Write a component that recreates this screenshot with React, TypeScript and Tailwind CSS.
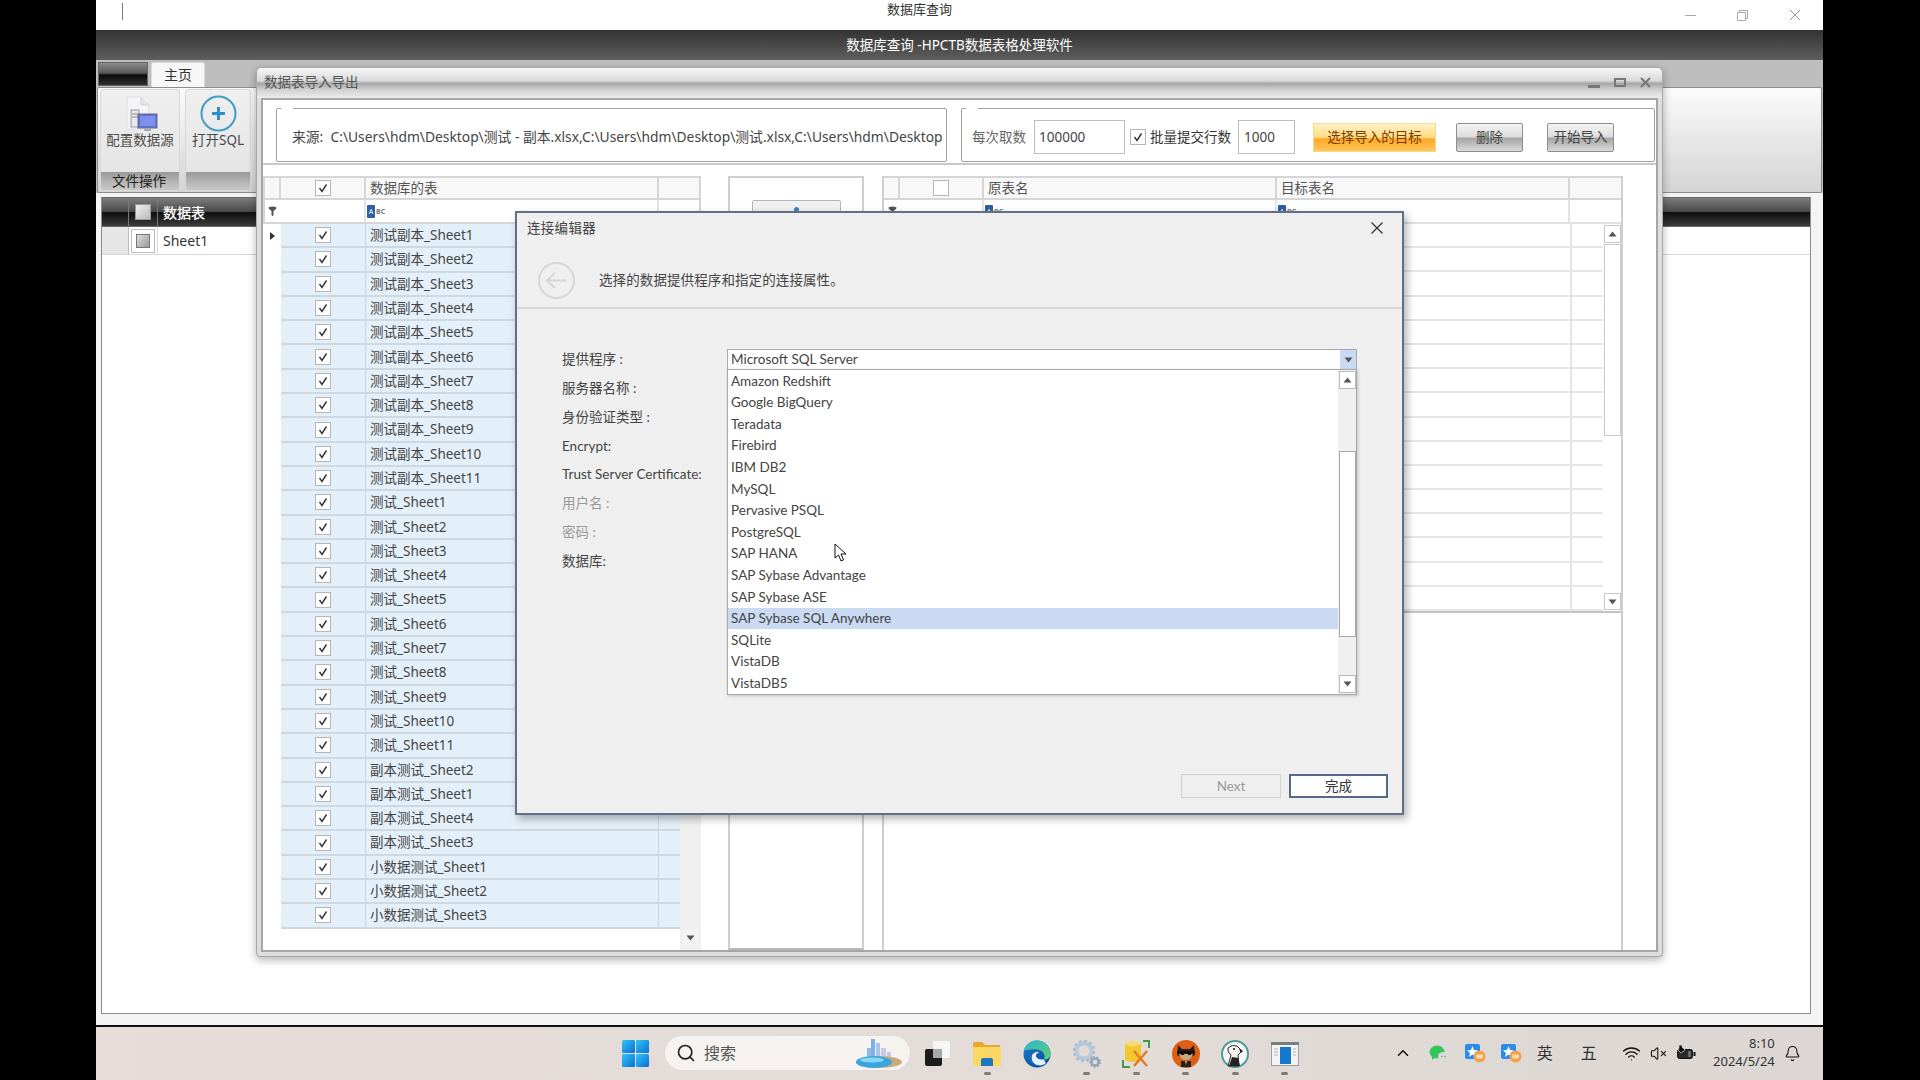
import { Bell, ChevronUp, Search, VolumeX, Wifi } from "lucide-react";

const TABLES = [
  ...Array.from({ length: 11 }, (_, i) => `测试副本_Sheet${i + 1}`),
  ...Array.from({ length: 11 }, (_, i) => `测试_Sheet${i + 1}`),
  "副本测试_Sheet2",
  "副本测试_Sheet1",
  "副本测试_Sheet4",
  "副本测试_Sheet3",
  "小数据测试_Sheet1",
  "小数据测试_Sheet2",
  "小数据测试_Sheet3",
];

const PROVIDERS = [
  "Amazon Redshift",
  "Google BigQuery",
  "Teradata",
  "Firebird",
  "IBM DB2",
  "MySQL",
  "Pervasive PSQL",
  "PostgreSQL",
  "SAP HANA",
  "SAP Sybase Advantage",
  "SAP Sybase ASE",
  "SAP Sybase SQL Anywhere",
  "SQLite",
  "VistaDB",
  "VistaDB5",
];

const FIELDS = [
  { label: "提供程序 :" },
  { label: "服务器名称 :" },
  { label: "身份验证类型 :" },
  { label: "Encrypt:" },
  { label: "Trust Server Certificate:" },
  { label: "用户名 :", muted: true },
  { label: "密码 :", muted: true },
  { label: "数据库:" },
];

function Check({ checked = true }: { checked?: boolean }) {
  return (
    <span className="flex h-[16px] w-[16px] items-center justify-center border border-[#b5b5b5] bg-white">
      {checked && (
        <svg width="12" height="12" viewBox="0 0 12 12" fill="none" stroke="#333" strokeWidth="1.4">
          <path d="M2.5 6 L5 9.5 L9.5 2.5" />
        </svg>
      )}
    </span>
  );
}

function Triangle({ up = false }: { up?: boolean }) {
  return (
    <svg width="9" height="6" viewBox="0 0 9 6" fill="#555">
      <path d={up ? "M4.5 0.5 L8.5 5.5 L0.5 5.5 Z" : "M0.5 0.5 L8.5 0.5 L4.5 5.5 Z"} />
    </svg>
  );
}

function AbcMark() {
  return (
    <span className="flex h-[13px] items-center">
      <span className="flex h-[13px] w-[8px] items-center justify-center rounded-[1px] bg-[#2f5f9e] text-[7px] leading-none text-white">
        A
      </span>
      <span className="ml-[1px] text-[7px] font-bold leading-none text-[#777]">BC</span>
    </span>
  );
}

function FilterMark() {
  return (
    <svg width="9" height="11" viewBox="0 0 9 11" fill="#555">
      <path d="M0.5 2 Q0.5 0.5 4.5 0.5 Q8.5 0.5 8.5 2 Q8.5 3 5.5 5 V9 L4.5 10.5 L3.5 9 V5 Q0.5 3 0.5 2 Z" />
    </svg>
  );
}

function DataSourceIcon() {
  return (
    <svg width="36" height="36" viewBox="0 0 36 36">
      <path d="M5 1 H19 L27 9 V33 H5 Z" fill="#f4f4f6" stroke="#dcdce0" />
      <path d="M19 1 V9 H27" fill="#e4e4e8" stroke="#d2d2d6" />
      <rect x="9" y="14" width="8" height="17" fill="#e9e9ec" stroke="#9a9ca6" />
      <path d="M10 18 H16 M10 21 H16" stroke="#8a8d96" />
      <rect x="16" y="18" width="19" height="14" fill="#5d72d8" stroke="#666b80" />
      <rect x="18" y="20" width="15" height="10" fill="#7f90ec" />
      <rect x="22" y="32" width="7" height="3" fill="#a7a9b2" />
    </svg>
  );
}

function WindowsLogo() {
  return (
    <svg width="27" height="27" viewBox="0 0 27 27">
      <defs>
        <linearGradient id="winBlue" x1="0" y1="0" x2="1" y2="1">
          <stop offset="0" stopColor="#35c3f5" />
          <stop offset="1" stopColor="#0670d6" />
        </linearGradient>
      </defs>
      <rect x="0" y="0" width="13" height="13" rx="1.5" fill="url(#winBlue)" />
      <rect x="14" y="0" width="13" height="13" rx="1" fill="url(#winBlue)" />
      <rect x="0" y="14" width="13" height="13" rx="1" fill="url(#winBlue)" />
      <rect x="14" y="14" width="13" height="13" rx="1.5" fill="url(#winBlue)" />
    </svg>
  );
}

function CityArt() {
  return (
    <svg width="47" height="32" viewBox="0 0 47 32">
      <rect x="16" y="2" width="4" height="20" fill="#7fb1e6" />
      <rect x="21" y="6" width="4" height="16" fill="#a6c6ee" />
      <rect x="12" y="11" width="4" height="11" fill="#93bbea" />
      <rect x="26" y="11" width="5" height="11" fill="#c7c9e8" />
      <rect x="32" y="15" width="4" height="7" fill="#c4c8dc" />
      <ellipse cx="24" cy="25" rx="23" ry="6" fill="#c9aa7a" />
      <ellipse cx="19" cy="25" rx="18" ry="6" fill="#39a7dd" />
      <ellipse cx="17" cy="23" rx="12" ry="2.5" fill="#8bd7f5" />
    </svg>
  );
}

function TaskViewIcon() {
  return (
    <svg width="27" height="27" viewBox="0 0 27 27">
      <rect x="9" y="1" width="17" height="17" rx="2" fill="#f6f6f6" />
      <rect x="1" y="9" width="17" height="17" rx="2" fill="#1c1c1c" />
      <rect x="9" y="9" width="9" height="9" fill="#a9a9a9" />
    </svg>
  );
}

function FolderIcon() {
  return (
    <svg width="28" height="26" viewBox="0 0 28 26">
      <path d="M0 3 Q0 1 2 1 H9 L12 4 H27 V24 H0 Z" fill="#e9a92c" />
      <rect x="0" y="6" width="28" height="19" rx="1" fill="#fbd864" />
      <path d="M8 25 V19 Q8 17 10 17 H18 Q20 17 20 19 V25 Z" fill="#1f77c4" />
    </svg>
  );
}

function EdgeIcon() {
  return (
    <svg width="28" height="28" viewBox="0 0 28 28">
      <defs>
        <linearGradient id="edgeBlue" x1="0" y1="0" x2="0.6" y2="1">
          <stop offset="0" stopColor="#1b7fd2" />
          <stop offset="1" stopColor="#0c4f9d" />
        </linearGradient>
        <linearGradient id="edgeGreen" x1="0" y1="0" x2="1" y2="1">
          <stop offset="0" stopColor="#2fb6c9" />
          <stop offset="1" stopColor="#5ed07a" />
        </linearGradient>
      </defs>
      <circle cx="14" cy="14" r="13.5" fill="url(#edgeBlue)" />
      <path d="M1 11 C3 4 8 0.5 14 0.5 C22 0.5 27.5 6 27.5 13.5 C27.5 18 24 20 21 19.5 C23 15 20 10 14 9.5 C8 9 3 10 1 11 Z" fill="url(#edgeGreen)" />
      <path d="M21 19.5 C17 20 13 18.5 13 15.5 C13 13.5 15 12.5 16.5 12.5 C13 10.5 8.5 13 8.5 17.5 C8.5 22 12 25.5 17 25.5 C19 25.5 21 24.5 23 23 C22 22 21.5 21 21 19.5 Z" fill="#e4f2fb" />
      <path d="M14 12 C10 12.5 8.5 15 8.5 17.5 C8.5 22 12 25.5 17 25.5 C12 27 6 23 6 17 C6 14 9 11.5 14 12 Z" fill="#1f69bd" />
    </svg>
  );
}

function GearsIcon() {
  return (
    <svg width="28" height="28" viewBox="0 0 28 28" fill="none">
      <circle cx="11" cy="11" r="7.5" stroke="#b8c9da" strokeWidth="4" />
      <circle cx="11" cy="11" r="10" stroke="#a9bccf" strokeWidth="2.5" strokeDasharray="3 2.2" />
      <circle cx="22" cy="22" r="3.5" stroke="#98a9b8" strokeWidth="2.5" />
      <circle cx="22" cy="22" r="5" stroke="#8b9cab" strokeWidth="1.5" strokeDasharray="2 1.5" />
    </svg>
  );
}

function DbToolsIcon() {
  return (
    <svg width="28" height="28" viewBox="0 0 28 28" fill="none">
      <ellipse cx="11" cy="4" rx="8" ry="3" fill="#f7d875" />
      <path d="M3 4 V20 Q11 24 19 20 V4 Q11 9 3 4 Z" fill="#f3c72f" />
      <path d="M21 1 H27 V8 M1 20 V27 H8" stroke="#3f9a4a" strokeWidth="2" />
      <path d="M12 26 L25 11 M12 11 L25 26" stroke="#e17a25" strokeWidth="2.4" />
    </svg>
  );
}

function CatIcon() {
  return (
    <svg width="28" height="28" viewBox="0 0 28 28">
      <circle cx="14" cy="14" r="14" fill="#dd5f14" />
      <path d="M6 5 L10 9 H18 L22 5 L23 15 Q14 21 5 15 Z" fill="#2a1c18" />
      <path d="M7 14 H21 Q19 20 14 20 Q9 20 7 14 Z" fill="#c9a77c" />
      <path d="M5 11 H23 V13 H19 V15 H16 V13 H12 V15 H9 V13 H5 Z" fill="#0e0e0e" />
      <path d="M9 21 H19 V27 H9 Z" fill="#26201f" />
      <path d="M13 21 L14 25 L15 21 Z" fill="#d6b98a" />
    </svg>
  );
}

function DogIcon() {
  return (
    <svg width="28" height="28" viewBox="0 0 28 28">
      <circle cx="14" cy="14" r="13" fill="#f6f8f7" stroke="#4e9c9f" strokeWidth="2" />
      <path d="M7 8 Q11 4 16 6 L21 11 L17 15 L18 26 H7 L10 15 Q6 12 7 8 Z" fill="#f4f4f2" stroke="#2b2b2b" strokeWidth="1" />
      <path d="M8 26 L11 17 L17 18 L19 26 Z" fill="#232323" />
      <circle cx="13" cy="9" r="1" fill="#111" />
      <path d="M18 9 L22 11 L20 13 Z" fill="#111" />
    </svg>
  );
}

function BlueWindowIcon() {
  return (
    <svg width="28" height="26" viewBox="0 0 28 26">
      <rect x="0.5" y="2.5" width="27" height="22" fill="#f3f3f3" stroke="#9d9d9d" />
      <rect x="0" y="1" width="28" height="3" fill="#7a7d80" />
      <rect x="9" y="6" width="11" height="17" fill="#1578cf" />
      <path d="M3 8 H7 M3 11 H7 M3 14 H7 M22 8 H25 M22 11 H25 M22 14 H25" stroke="#b4b4b4" />
    </svg>
  );
}

function WeChatIcon() {
  return (
    <svg width="20" height="17" viewBox="0 0 20 17">
      <ellipse cx="8" cy="7" rx="7.5" ry="6.5" fill="#35c45c" />
      <path d="M3 11 L3 15 L7 12 Z" fill="#35c45c" />
      <ellipse cx="14.5" cy="11.5" rx="5.5" ry="4.5" fill="#d9dcd9" />
      <circle cx="13" cy="11.5" r="0.8" fill="#8d918d" />
      <circle cx="16" cy="11.5" r="0.8" fill="#8d918d" />
    </svg>
  );
}

function BadgeIcon() {
  return (
    <svg width="21" height="19" viewBox="0 0 21 19">
      <rect x="0" y="0" width="15" height="15" rx="2" fill="#2d8bea" />
      <path d="M7.5 2 L9 6 L13 6.5 L10 9 L11 13 L7.5 10.5 L4 13 L5 9 L2 6.5 L6 6 Z" fill="#fff" />
      <circle cx="14.5" cy="12.5" r="6" fill="#f0a24a" />
      <rect x="11" y="10.5" width="7" height="4" rx="1" fill="#f9d9ae" />
    </svg>
  );
}

function BatteryIcon() {
  return (
    <svg width="20" height="16" viewBox="0 0 20 16">
      <rect x="1.5" y="4.5" width="15" height="9" rx="2" fill="#2a2a2a" stroke="#111" />
      <rect x="12" y="6" width="3" height="6" fill="#6b6966" />
      <rect x="17.5" y="7" width="2" height="4" fill="#111" />
      <path d="M3 0 L6 0 L6 2 L9 5 L5 8 L2 5 L3 3 Z" fill="#111" stroke="#e0dad6" strokeWidth="0.7" />
    </svg>
  );
}

const TASK_APPS = [
  { icon: <TaskViewIcon />, open: false },
  { icon: <FolderIcon />, open: true },
  { icon: <EdgeIcon />, open: false },
  { icon: <GearsIcon />, open: true },
  { icon: <DbToolsIcon />, open: true },
  { icon: <CatIcon />, open: true },
  { icon: <DogIcon />, open: true },
  { icon: <BlueWindowIcon />, open: true },
];

function RibbonGroup({
  width,
  label,
  title,
  icon,
}: {
  width: string;
  label: string;
  title: string;
  icon: React.ReactNode;
}) {
  return (
    <div className={`flex ${width} flex-col overflow-hidden rounded-[3px] border border-[#d8d8d8] bg-[linear-gradient(#f0efef,#e3e3e3)]`}>
      <div className="flex flex-1 flex-col items-center pt-[5px]">
        <div className="flex h-[37px] items-center">{icon}</div>
        <span className="whitespace-nowrap text-[13.5px] leading-[16px] text-[#4a4a4a]">{title}</span>
      </div>
      <div className="flex h-[18px] items-center justify-center bg-[linear-gradient(#9a9a9a,#c9c9c9)] pr-[2px] text-[13.5px] text-[#222]">
        {label}
      </div>
    </div>
  );
}

function Ribbon() {
  return (
    <div className="h-[133px] shrink-0 bg-[#bebebe] pl-[1px] pr-[1px] pt-[2px]">
      <div className="flex h-[25px] items-stretch pl-[1px]">
        <div className="h-[24px] w-[50px] border border-[#666] bg-[linear-gradient(#8a8a8a,#5a5a5a_45%,#0c0c0c_55%,#2e2e2e)]" />
        <div className="ml-[3px] flex w-[54px] items-center justify-center rounded-t-[3px] border border-b-0 border-[#ddd] bg-[#f7f7f7] pb-[2px] text-[14px] text-[#333]">
          主页
        </div>
      </div>
      <div className="flex h-[106px] gap-[5px] rounded-[2px] border border-[#8c8c8c] bg-[linear-gradient(#fbfbfb,#d4d4d4)] px-[2px] py-[1px]">
        <RibbonGroup width="w-[80px]" label="文件操作" title="配置数据源" icon={<DataSourceIcon />} />
        <RibbonGroup
          width="w-[66px]"
          label=""
          title="打开SQL"
          icon={
            <svg width="37" height="37" viewBox="0 0 37 37" fill="none">
              <circle cx="18.5" cy="18.5" r="17" stroke="#3f9cc2" strokeWidth="2" />
              <path d="M18.5 12 V25 M12 18.5 H25" stroke="#2e8ed0" strokeWidth="3" />
            </svg>
          }
        />
      </div>
    </div>
  );
}

function SheetList() {
  return (
    <div className="flex min-h-0 flex-1 flex-col bg-[#f4f4f4] pl-[5px] pr-[12px] pt-[4px]">
      <div className="flex h-[817px] flex-col border border-t-0 border-[#8c8c8c] bg-white">
        <div className="flex h-[30px] items-stretch border-y border-[#666] bg-[linear-gradient(#7d7d7d,#4b4b4b_48%,#0f0f0f_52%,#3c3c3c)] text-[14px] text-white">
          <div className="w-[27px] border-r border-[#777]" />
          <div className="flex w-[29px] items-center justify-center border-r border-[#777]">
            <span className="h-[16px] w-[16px] border border-[#999] bg-[linear-gradient(135deg,#eee,#bbb)]" />
          </div>
          <div className="flex items-center pl-[5px] [text-shadow:0_0_1px_#ddd]">数据表</div>
        </div>
        <div className="flex h-[28px] items-stretch border-b border-[#d8d8d8] text-[14px] text-[#333]">
          <div className="w-[27px] border-r border-[#bbb] bg-[#e6e6e6]" />
          <div className="flex w-[29px] items-center justify-center border-r border-[#ddd]">
            <span className="flex h-[24px] w-[24px] items-center justify-center border border-[#bbb]">
              <span className="h-[14px] w-[14px] border border-[#777] bg-[linear-gradient(135deg,#ddd,#999)]" />
            </span>
          </div>
          <div className="flex items-center pl-[5px]">Sheet1</div>
        </div>
      </div>
    </div>
  );
}

function GroupBox({ className, children }: { className: string; children: React.ReactNode }) {
  return (
    <div className={`relative flex h-[54px] items-center rounded-[2px] border border-[#a0a0a0] pt-[4px] ${className}`}>
      <span className="absolute -top-[2px] left-[4px] h-[3px] w-[12px] bg-white" />
      {children}
    </div>
  );
}

function LeftGrid() {
  return (
    <div className="flex w-[438px] flex-col">
      <div className="flex h-[24px] items-stretch border-2 border-b-2 border-[#d6d6d6] bg-[#f8f8f8] text-[13.5px] text-[#555]">
        <div className="w-[16px] border-r-2 border-[#d6d6d6]" />
        <div className="flex w-[85px] items-center justify-center border-r-2 border-[#d6d6d6]">
          <Check />
        </div>
        <div className="flex w-[293px] items-center border-r-2 border-[#d6d6d6] pl-[4px]">数据库的表</div>
      </div>
      <div className="flex h-[24px] items-stretch border-x-2 border-b-2 border-[#d6d6d6]">
        <div className="flex w-[16px] items-center justify-center pr-[2px]">
          <FilterMark />
        </div>
        <div className="w-[85px] border-r-2 border-[#e4e4e4]" />
        <div className="flex w-[293px] items-center border-r-2 border-[#e4e4e4] pl-[1px]">
          <AbcMark />
        </div>
      </div>
      <div className="flex min-h-0 flex-1">
        <div className="flex w-[417px] flex-col">
          {TABLES.map((name, i) => (
            <div key={name} className="flex h-[24.3px] shrink-0 items-stretch text-[13.5px] text-[#444]">
              <div className="flex w-[18px] items-center justify-center bg-white">
                {i === 0 && <span className="h-0 w-0 border-y-[4px] border-l-[5px] border-y-transparent border-l-[#333]" />}
              </div>
              <div className="flex flex-1 items-stretch border-b-2 border-[#cfd8df] bg-[#e4f0f9]">
                <div className="flex w-[85px] items-center justify-center border-r border-[#c9d3db]">
                  <Check />
                </div>
                <div className="flex w-[293px] items-center border-r border-[#c9d3db] pl-[4px]">{name}</div>
              </div>
            </div>
          ))}
        </div>
        <div className="flex w-[21px] flex-col items-center justify-end bg-[#efefef] pb-[3px]">
          <span className="flex h-[18px] w-[16px] items-center justify-center bg-[#f2f2f2]">
            <Triangle />
          </span>
        </div>
      </div>
    </div>
  );
}

function RightGrid() {
  return (
    <div className="flex h-full w-[741px] flex-col border-x-2 border-[#cfcfcf]">
      <div className="flex h-[24px] items-stretch border-y-2 border-[#d6d6d6] bg-[#f8f8f8] text-[13.5px] text-[#555]">
        <div className="w-[16px] border-r-2 border-[#d6d6d6]" />
        <div className="flex w-[84px] items-center justify-center border-r-2 border-[#d6d6d6]">
          <Check checked={false} />
        </div>
        <div className="flex w-[293px] items-center border-r-2 border-[#d6d6d6] pl-[4px]">原表名</div>
        <div className="flex w-[293px] items-center border-r-2 border-[#d6d6d6] pl-[4px]">目标表名</div>
      </div>
      <div className="flex h-[24px] items-stretch border-b-2 border-[#e0e0e0]">
        <div className="flex w-[16px] items-center justify-center">
          <FilterMark />
        </div>
        <div className="w-[84px] border-r-2 border-[#e4e4e4]" />
        <div className="flex w-[293px] items-center border-r-2 border-[#e4e4e4] pl-[1px]">
          <AbcMark />
        </div>
        <div className="flex w-[293px] items-center border-r-2 border-[#e4e4e4] pl-[1px]">
          <AbcMark />
        </div>
      </div>
      <div className="flex h-[389px] border-b-2 border-[#c4c4c4]">
        <div className="flex w-[719px] flex-col">
          {Array.from({ length: 16 }, (_, i) => (
            <div key={i} className="flex h-[24.2px] shrink-0 border-b-2 border-[#e6e6e6]">
              <div className="w-[686px]" />
              <div className="flex-1 border-l-2 border-[#e4e4e4]" />
            </div>
          ))}
        </div>
        <div className="flex w-[18px] flex-col items-center pt-[1px]">
          <span className="flex h-[18px] w-[17px] items-center justify-center border border-[#c8c8c8]">
            <Triangle up />
          </span>
          <span className="mt-[1px] h-[192px] w-[17px] border border-[#c8c8c8]" />
          <span className="mt-auto mb-[1px] flex h-[17px] w-[17px] items-center justify-center border border-[#c8c8c8]">
            <Triangle />
          </span>
        </div>
      </div>
    </div>
  );
}

function ImportWindow() {
  const glossy = "bg-[linear-gradient(#f4f4f4,#dcdcdc_48%,#a5a5a5_52%,#d9d9d9)]";
  return (
    <div className="absolute left-[256px] top-[67px] flex h-[890px] w-[1407px] flex-col rounded-t-[5px] rounded-b-[4px] border border-[#a8a8a8] bg-[#dedede] shadow-[0_3px_8px_rgba(0,0,0,0.3)]">
      <div className="flex h-[30px] shrink-0 items-center justify-between rounded-t-[5px] bg-[linear-gradient(#f6f6f6,#dadada_42%,#a6a6a6_52%,#d0d0d0_72%,#ededed)] pb-[2px] pl-[7px] pr-[11px] text-[13.5px] text-[#555]">
        <span>数据表导入导出</span>
        <div className="flex items-center gap-[14px] text-[#666]">
          <span className="mt-[8px] h-[3px] w-[12px] bg-[#777]" />
          <span className="h-[9px] w-[12px] border-2 border-[#777]" />
          <svg width="11" height="11" viewBox="0 0 11 11" stroke="#777" strokeWidth="2">
            <path d="M1 1 L10 10 M10 1 L1 10" />
          </svg>
        </div>
      </div>
      <div className="mx-[4px] mb-[4px] flex min-h-0 flex-1 flex-col border-2 border-[#a6a6a6] bg-white">
        <div className="flex gap-[14px] border-b-2 border-[#c8c8c8] pb-[1px] pl-[13px] pt-[8px] text-[13.5px] text-[#444]">
          <GroupBox className="w-[671px] pl-[15px]">
            <span className="whitespace-nowrap text-[13.8px]">来源:&nbsp; C:\Users\hdm\Desktop\测试 - 副本.xlsx,C:\Users\hdm\Desktop\测试.xlsx,C:\Users\hdm\Desktop</span>
          </GroupBox>
          <GroupBox className="w-[694px]">
            <span className="ml-[10px] text-[#666]">每次取数</span>
            <span className="ml-[8px] flex h-[34px] w-[91px] items-center border border-[#bdbdbd] pl-[4px]">100000</span>
            <span className="ml-[5px]">
              <Check />
            </span>
            <span className="ml-[4px] text-[#333]">批量提交行数</span>
            <span className="ml-[7px] flex h-[34px] w-[57px] items-center border border-[#bdbdbd] pl-[5px]">1000</span>
            <span className="ml-[18px] flex h-[29px] w-[123px] items-center justify-center border border-[#f2d98c] bg-[linear-gradient(#fff2c8,#ffd980_50%,#ffa726_55%,#ffc65a)] text-[#7a3d00]">
              选择导入的目标
            </span>
            <span className={`ml-[20px] flex h-[29px] w-[67px] items-center justify-center rounded-[2px] border border-[#8e8e8e] ${glossy}`}>
              删除
            </span>
            <span className={`ml-[24px] flex h-[29px] w-[67px] items-center justify-center rounded-[2px] border border-[#8e8e8e] ${glossy}`}>
              开始导入
            </span>
          </GroupBox>
        </div>
        <div className="flex min-h-0 flex-1 pt-[11px]">
          <LeftGrid />
          <div className="ml-[27px] flex w-[136px] justify-center border-x-2 border-y-2 border-[#cfcfcf] border-b-[#b8b8b8] pt-[22px]">
            <div className="flex h-[40px] w-[89px] justify-center rounded-[2px] border border-[#b5b5b5] bg-[#f0f0f0] pt-[6px]">
              <span className="h-[5px] w-[5px] rounded-full bg-[#3a7fc4]" />
            </div>
          </div>
          <div className="ml-[18px]">
            <RightGrid />
          </div>
        </div>
      </div>
    </div>
  );
}

function ConnectionDialog() {
  return (
    <div className="absolute left-[515px] top-[211px] flex h-[604px] w-[889px] flex-col border-2 border-[#5f7088] bg-[#efefef] font-['Lato','Noto_Sans_CJK_SC',sans-serif] text-[13.5px] text-[#444] shadow-[3px_4px_8px_rgba(0,0,0,0.3)]">
      <div className="flex h-[96px] shrink-0 flex-col border-b-2 border-[#d8d8d8]">
        <div className="flex h-[30px] items-center justify-between pl-[10px] pr-[19px]">
          <span className="tracking-[0.3px]">连接编辑器</span>
          <svg width="12" height="12" viewBox="0 0 12 12" stroke="#333" strokeWidth="1.2">
            <path d="M0.5 0.5 L11.5 11.5 M11.5 0.5 L0.5 11.5" />
          </svg>
        </div>
        <div className="mt-[19px] flex items-center pl-[21px]">
          <svg width="37" height="37" viewBox="0 0 37 37" fill="none" stroke="#d6d6d6" strokeWidth="2">
            <circle cx="18.5" cy="18.5" r="17.5" />
            <path d="M9 18.5 H28 M17 11 L9 18.5 L17 26" />
          </svg>
          <span className="ml-[24px] tracking-[0.1px]">选择的数据提供程序和指定的连接属性。</span>
        </div>
      </div>
      <div className="flex min-h-0 flex-1 pl-[45px] pt-[36px]">
        <div className="flex w-[165px] flex-col">
          {FIELDS.map((field) => (
            <div
              key={field.label}
              className={`flex h-[28.8px] items-center whitespace-nowrap ${field.muted ? "text-[#999]" : ""}`}
            >
              {field.label}
            </div>
          ))}
        </div>
        <div className="relative mt-[4px] h-[21px] w-[630px]">
          <div className="flex h-[21px] items-center justify-between border border-[#a9a9a9] bg-white pl-[3px]">
            <span>Microsoft SQL Server</span>
            <span className="flex h-full w-[16px] items-center justify-center bg-[#c9daf2]">
              <Triangle />
            </span>
          </div>
          <div className="absolute left-0 top-[20px] flex h-[326px] w-[630px] border border-[#a9a9a9] bg-white shadow-[1px_1px_3px_rgba(0,0,0,0.2)]">
            <div className="flex flex-1 flex-col">
              {PROVIDERS.map((name) => (
                <div
                  key={name}
                  className={`flex h-[21.6px] shrink-0 items-center pl-[3px] ${name === "SAP Sybase SQL Anywhere" ? "bg-[#c9daf2]" : ""}`}
                >
                  {name}
                </div>
              ))}
            </div>
            <div className="flex w-[18px] flex-col items-center bg-[#f0f0f0] py-[1px]">
              <span className="flex h-[18px] w-[17px] items-center justify-center border border-[#bcbcbc] bg-white">
                <Triangle up />
              </span>
              <span className="mt-[62px] h-[186px] w-[17px] border border-[#a8a8a8] bg-white" />
              <span className="mt-auto flex h-[18px] w-[17px] items-center justify-center border border-[#bcbcbc] bg-white">
                <Triangle />
              </span>
            </div>
          </div>
        </div>
      </div>
      <div className="flex justify-end gap-[8px] pb-[15px] pr-[14px]">
        <div className="flex h-[24px] w-[100px] items-center justify-center border border-[#d0d0d0] text-[#999]">Next</div>
        <div className="flex h-[24px] w-[99px] items-center justify-center border-2 border-[#55688a] bg-white text-[#333]">
          完成
        </div>
      </div>
    </div>
  );
}

function Taskbar() {
  return (
    <div className="flex h-[53px] shrink-0 items-start bg-[linear-gradient(90deg,#e7ddd9,#e2dbd7_60%,#dcd7d4)] pl-[526px] text-[#333]">
      <div className="mt-[13px]">
        <WindowsLogo />
      </div>
      <div className="relative ml-[16px] mt-[9px] flex h-[34px] w-[245px] items-center rounded-full bg-[#f6f2f0] pl-[11px] text-[16px] text-[#555]">
        <Search size={20} strokeWidth={2} className="text-[#222]" />
        <span className="ml-[8px]">搜索</span>
        <span className="absolute right-[8px] top-[1px]">
          <CityArt />
        </span>
      </div>
      <div className="ml-[3px] flex">
        {TASK_APPS.map((app, i) => (
          <div key={i} className="flex w-[49.6px] flex-col items-center pt-[13px]">
            <div className="flex h-[27px] items-center justify-center">{app.icon}</div>
            <span className={`mt-[5px] h-[3px] w-[7px] rounded-full ${app.open ? "bg-[#7b7b7b]" : ""}`} />
          </div>
        ))}
      </div>
      <div className="ml-[84px] mt-[17px] flex h-[18px] items-center">
        <ChevronUp size={18} strokeWidth={2} className="text-[#111]" />
        <span className="ml-[17px]">
          <WeChatIcon />
        </span>
        <span className="ml-[16px]">
          <BadgeIcon />
        </span>
        <span className="ml-[15px]">
          <BadgeIcon />
        </span>
        <span className="ml-[15px] text-[16px]">英</span>
        <span className="ml-[28px] text-[16px]">五</span>
        <Wifi size={19} strokeWidth={1.7} className="ml-[25px] text-[#111]" />
        <VolumeX size={17} strokeWidth={1.5} className="ml-[9px] text-[#111]" />
        <span className="ml-[9px]">
          <BatteryIcon />
        </span>
      </div>
      <div className="ml-[12px] mt-[7px] w-[67px] text-right text-[13px] leading-[18px] text-[#333]">
        <div>8:10</div>
        <div>2024/5/24</div>
      </div>
      <Bell size={17} strokeWidth={1.5} className="ml-[9px] mt-[18px] text-[#111]" />
    </div>
  );
}

export default function App() {
  return (
    <div className="relative flex h-[1080px] w-[1920px] overflow-hidden bg-black font-['Noto_Sans','Noto_Sans_CJK_SC',sans-serif]">
      <div className="ml-[96px] flex h-full w-[1727px] flex-col bg-white">
        <div className="relative flex h-[30px] shrink-0 items-center justify-center bg-white pb-[10px] pr-[80px] text-[13px] text-[#333]">
          <span className="absolute left-[26px] top-[3px] h-[17px] w-[1px] bg-[#777]" />
          <span>数据库查询</span>
          <div className="absolute right-[22px] top-[9px] flex items-center gap-[41px] text-[#999]">
            <span className="h-[1px] w-[11px] bg-[#aaa]" />
            <svg width="11" height="11" viewBox="0 0 11 11" fill="none" stroke="#aaa">
              <path d="M0.5 2.5 H8.5 V10.5 H0.5 Z M2.5 2.5 V0.5 H10.5 V8.5 H8.5" />
            </svg>
            <svg width="12" height="12" viewBox="0 0 12 12" stroke="#999">
              <path d="M1 1 L11 11 M11 1 L1 11" />
            </svg>
          </div>
        </div>
        <div className="flex h-[30px] shrink-0 items-center justify-center bg-[linear-gradient(#333,#5e5e5e)] pt-[1px] text-[13.5px] text-white">
          数据库查询 -HPCTB数据表格处理软件
        </div>
        <Ribbon />
        <SheetList />
        <div className="h-[2px] shrink-0 bg-[#111]" />
        <Taskbar />
      </div>
      <ImportWindow />
      <ConnectionDialog />
      <svg className="absolute left-[834px] top-[543px]" width="13" height="19" viewBox="0 0 13 19">
        <path d="M1 1 V15 L4.5 12 L7 18 L9.5 17 L7 11 L12 11 Z" fill="#fff" stroke="#111" strokeWidth="1" />
      </svg>
    </div>
  );
}
